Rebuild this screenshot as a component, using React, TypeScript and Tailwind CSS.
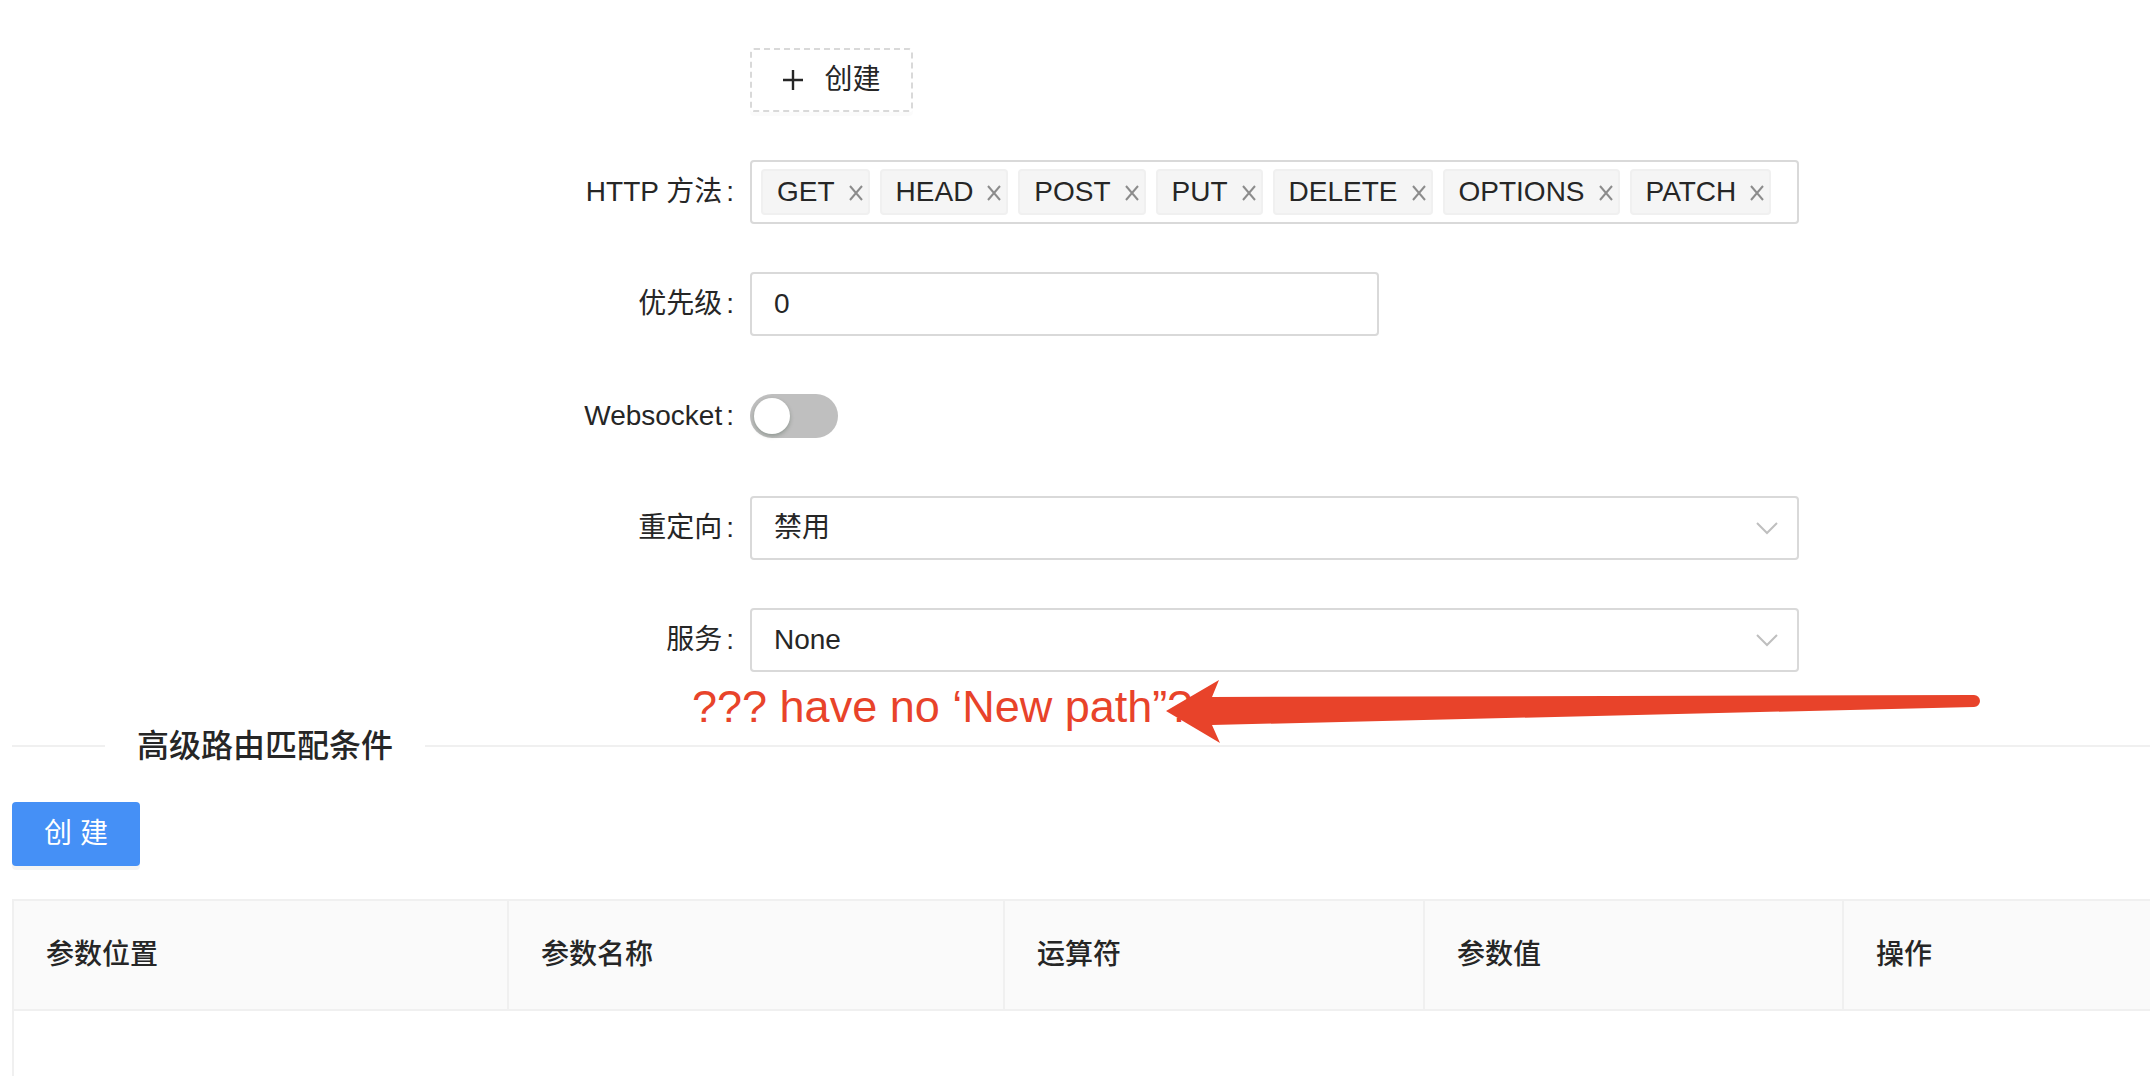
import React from 'react';

const font = "font-['Liberation_Sans','Noto_Sans_CJK_SC',sans-serif]";
const methods = ['GET', 'HEAD', 'POST', 'PUT', 'DELETE', 'OPTIONS', 'PATCH'];

function Label({ text }: { text?: string }) {
  return (
    <div className="w-[738px] shrink-0 flex items-center justify-end pr-[16px] h-[64px] text-[28px] text-[#262626]">
      {text && (
        <>
          <span>{text}</span>
          <span className="ml-[4px]">:</span>
        </>
      )}
    </div>
  );
}

function Chevron() {
  return (
    <svg width="24" height="24" viewBox="0 0 24 24" className="shrink-0">
      <polyline points="2,7 12,17 22,7" fill="none" stroke="#bfbfbf" strokeWidth="2" />
    </svg>
  );
}

function Close() {
  return (
    <svg width="20" height="20" viewBox="0 0 20 20" className="shrink-0">
      <path d="M4 4 L16 18 M16 4 L4 18" stroke="#8c8c8c" strokeWidth="2" />
    </svg>
  );
}

function SelectBox({ value }: { value: string }) {
  return (
    <div className="w-[1049px] h-[64px] border-2 border-[#d9d9d9] rounded-[4px] flex items-center justify-between pl-[22px] pr-[18px] text-[28px] text-[#262626]">
      <span>{value}</span>
      <Chevron />
    </div>
  );
}

export default function App() {
  return (
    <div className={`relative w-[2150px] h-[1076px] overflow-hidden bg-white ${font}`}>
      <div className="pl-[12px] pt-[48px]">
        {/* create */}
        <div className="flex mb-[48px]">
          <Label />
          <button className="w-[163px] h-[64px] border-2 border-dashed border-[#d9d9d9] rounded-[4px] flex items-center justify-center gap-[20px] text-[28px] text-[#262626] shadow-[0_4px_0_rgba(0,0,0,0.015)]">
            <svg width="22" height="22" viewBox="0 0 22 22">
              <path d="M11 1 V21 M1 11 H21" stroke="#262626" strokeWidth="2.4" />
            </svg>
            <span>创建</span>
          </button>
        </div>

        {/* methods */}
        <div className="flex mb-[48px]">
          <Label text="HTTP 方法" />
          <div className="w-[1049px] h-[64px] border-2 border-[#d9d9d9] rounded-[4px] flex items-center pl-[9px] gap-[10px]">
            {methods.map(m => (
              <div key={m} className="h-[46px] bg-[#f5f5f5] border-2 border-[#f0f0f0] rounded-[4px] flex items-center pl-[14px] pr-[2px] gap-[11px] text-[28px] text-[#262626]">
                <span>{m}</span>
                <Close />
              </div>
            ))}
          </div>
        </div>

        {/* priority */}
        <div className="flex mb-[48px]">
          <Label text="优先级" />
          <div className="w-[629px] h-[64px] border-2 border-[#d9d9d9] rounded-[4px] flex items-center pl-[22px] text-[28px] text-[#262626]">0</div>
        </div>

        {/* websocket */}
        <div className="flex mb-[48px] items-center">
          <Label text="Websocket" />
          <div className="w-[88px] h-[44px] rounded-full bg-[#bfbfbf] p-[4px] flex items-center">
            <div className="w-[36px] h-[36px] rounded-full bg-white shadow-[0_2px_4px_rgba(0,35,11,0.25)]" />
          </div>
        </div>

        {/* redirect */}
        <div className="flex mb-[48px]">
          <Label text="重定向" />
          <SelectBox value="禁用" />
        </div>

        {/* service */}
        <div className="flex">
          <Label text="服务" />
          <SelectBox value="None" />
        </div>

        {/* divider */}
        <div className="flex items-center h-[44px] mt-[52px] mb-[34px]">
          <div className="w-[93px] h-[2px] bg-[#f0f0f0]" />
          <div className="px-[32px] text-[32px] font-medium text-[#262626] whitespace-nowrap">高级路由匹配条件</div>
          <div className="flex-1 h-[2px] bg-[#f0f0f0]" />
        </div>

        <button className="w-[128px] h-[64px] rounded-[4px] bg-[#4590f6] text-white text-[28px] tracking-[8px] pl-[8px] shadow-[0_4px_0_rgba(0,0,0,0.045)]">创建</button>

        {/* table */}
        <div className="mt-[33px] w-[2400px] border-l-2 border-t-2 border-[#f0f0f0]">
          <div className="flex h-[110px] bg-[#fafafa] border-b-2 border-[#f0f0f0] text-[28px] font-medium text-[#262626]">
            <div className="w-[495px] shrink-0 border-r-2 border-[#f0f0f0] flex items-center px-[32px]">参数位置</div>
            <div className="w-[496px] shrink-0 border-r-2 border-[#f0f0f0] flex items-center px-[32px]">参数名称</div>
            <div className="w-[420px] shrink-0 border-r-2 border-[#f0f0f0] flex items-center px-[32px]">运算符</div>
            <div className="w-[419px] shrink-0 border-r-2 border-[#f0f0f0] flex items-center px-[32px]">参数值</div>
            <div className="w-[500px] shrink-0 border-r-2 border-[#f0f0f0] flex items-center px-[32px]">操作</div>
          </div>
          <div className="h-[200px]" />
        </div>
      </div>

      {/* annotation overlay */}
      <div className="absolute left-[692px] top-[684px] text-[45px] leading-[45px] text-[#e8432a] whitespace-nowrap font-['Liberation_Sans',sans-serif]">
        ??? have no ‘New path”?
      </div>
      <svg className="absolute left-0 top-0 pointer-events-none" width="2150" height="1076">
        <path d="M1166 711 L1219 680 L1212 697 L1974 695 A6 6 0 0 1 1974 707 L1212 725 L1220 743 Z" fill="#e8432a" />
      </svg>
    </div>
  );
}
